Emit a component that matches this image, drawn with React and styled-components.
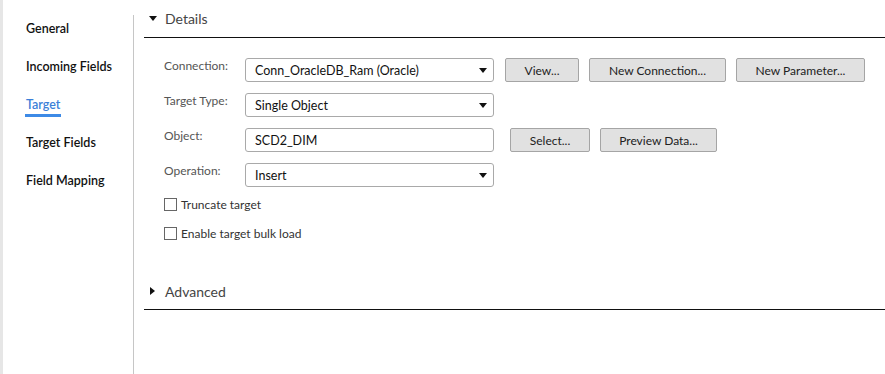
import styled, { createGlobalStyle } from 'styled-components';

const GlobalStyle = createGlobalStyle`
  html, body {
    margin: 0;
    padding: 0;
    background: #ffffff;
    font-family: "Lato", "Noto Sans", sans-serif;
  }
`;

const Page = styled.div`
  display: flex;
  width: 885px;
  height: 374px;
  overflow: hidden;
  background: #fff;
`;

const Strip = styled.div`
  width: 3px;
  background: #e6e6e6;
  flex-shrink: 0;
`;

const Nav = styled.nav`
  width: 130px;
  flex-shrink: 0;
  display: flex;
  flex-direction: column;
  padding: 20px 0 0 23px;
  box-sizing: border-box;
  gap: 20px;
`;

const NavItem = styled.div`
  font-size: 12.5px;
  font-weight: 600;
  line-height: 18px;
  color: ${p => (p.active ? '#3b7fd8' : '#111')};
  position: relative;
  align-self: flex-start;
  &::after {
    content: '';
    display: ${p => (p.active ? 'block' : 'none')};
    position: absolute;
    left: -1px;
    right: -1px;
    bottom: -3px;
    height: 3px;
    background: #3d8ae6;
  }
`;

const Divider = styled.div`
  width: 1px;
  margin-top: 15px;
  background: #c6c6c6;
  flex-shrink: 0;
`;

const Main = styled.main`
  flex: 1;
  padding-left: 10px;
  display: flex;
  flex-direction: column;
`;

const SectionHead = styled.div`
  height: ${p => p.h}px;
  display: flex;
  align-items: center;
  gap: 8px;
  padding-left: 5px;
  border-bottom: 1px solid #111;
  font-size: 14px;
  color: #444;
  box-sizing: border-box;
`;

const Caret = styled.span`
  width: 0;
  height: 0;
  border-left: ${p => (p.open ? '4px solid transparent' : '5px solid #111')};
  border-right: ${p => (p.open ? '4px solid transparent' : '0')};
  border-top: ${p => (p.open ? '5px solid #111' : '4px solid transparent')};
  border-bottom: ${p => (p.open ? '0' : '4px solid transparent')};
  margin-right: ${p => (p.open ? '0' : '2px')};
  margin-left: ${p => (p.open ? '0' : '1px')};
`;

const Form = styled.div`
  display: flex;
  flex-direction: column;
  padding: 20px 0 0 20px;
  gap: 11px;
`;

const Row = styled.div`
  display: flex;
  align-items: flex-start;
  height: 24px;
`;

const Label = styled.div`
  width: 81px;
  font-size: 12px;
  line-height: 16px;
  color: #555;
`;

const Field = styled.div`
  width: 249px;
  height: 24px;
  box-sizing: border-box;
  border: 1px solid #a9a9a9;
  border-radius: 3px;
  display: flex;
  align-items: center;
  justify-content: space-between;
  padding: 0 6px 0 9px;
  font-size: 12.5px;
  color: #111;
  background: #fff;
`;

const Arrow = styled.span`
  width: 0;
  height: 0;
  border-left: 4px solid transparent;
  border-right: 4px solid transparent;
  border-top: 5px solid #111;
`;

const Buttons = styled.div`
  display: flex;
  gap: 10px;
  margin-left: ${p => p.offset}px;
`;

const Button = styled.button`
  width: ${p => p.w}px;
  height: 24px;
  box-sizing: border-box;
  border: 1px solid #a5a5a5;
  border-radius: 2px;
  background: #e1e1e1;
  font-family: inherit;
  font-size: 12px;
  color: #222;
  padding: 0;
  cursor: pointer;
`;

const Checks = styled.div`
  display: flex;
  flex-direction: column;
  gap: 16px;
`;

const Check = styled.label`
  display: flex;
  align-items: center;
  gap: 4px;
  font-size: 12px;
  line-height: 13px;
  color: #333;
`;

const Box = styled.span`
  width: 11px;
  height: 11px;
  border: 1px solid #666;
  background: #fff;
`;

const Spacer = styled.div`
  height: ${p => p.h}px;
`;

const Select = ({ value }) => (
  <Field>
    {value}
    <Arrow />
  </Field>
);

export default function App() {
  return (
    <>
      <GlobalStyle />
      <Page>
        <Strip />
        <Nav>
          <NavItem>General</NavItem>
          <NavItem>Incoming Fields</NavItem>
          <NavItem active>Target</NavItem>
          <NavItem>Target Fields</NavItem>
          <NavItem>Field Mapping</NavItem>
        </Nav>
        <Divider />
        <Main>
          <SectionHead h={38}>
            <Caret open />
            Details
          </SectionHead>
          <Form>
            <Row>
              <Label>Connection:</Label>
              <Select value="Conn_OracleDB_Ram (Oracle)" />
              <Buttons offset={11}>
                <Button w={74}>View...</Button>
                <Button w={137}>New Connection...</Button>
                <Button w={129}>New Parameter...</Button>
              </Buttons>
            </Row>
            <Row>
              <Label>Target Type:</Label>
              <Select value="Single Object" />
            </Row>
            <Row>
              <Label>Object:</Label>
              <Field>SCD2_DIM</Field>
              <Buttons offset={16}>
                <Button w={80}>Select...</Button>
                <Button w={117}>Preview Data...</Button>
              </Buttons>
            </Row>
            <Row>
              <Label>Operation:</Label>
              <Select value="Insert" />
            </Row>
            <Checks>
              <Check>
                <Box />
                Truncate target
              </Check>
              <Check>
                <Box />
                Enable target bulk load
              </Check>
            </Checks>
          </Form>
          <Spacer h={33} />
          <SectionHead h={37}>
            <Caret />
            Advanced
          </SectionHead>
        </Main>
      </Page>
    </>
  );
}
